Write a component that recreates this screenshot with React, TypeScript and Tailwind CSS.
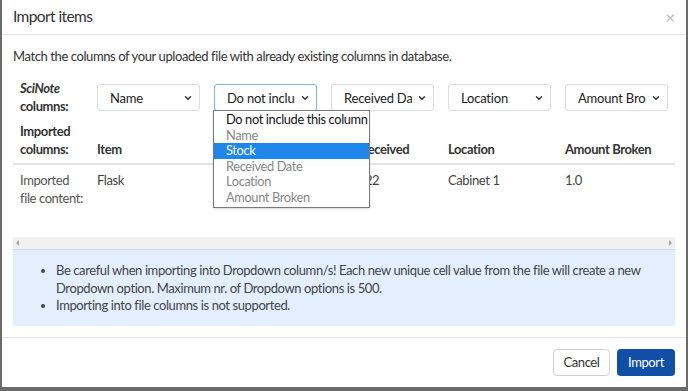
import { ChevronDown } from 'lucide-react';

const selects = ['Name', 'Do not include this column', 'Received Date', 'Location', 'Amount Broken'];
const headers = ['Item', 'Quantity', 'Date Received', 'Location', 'Amount Broken'];
const values = ['Flask', '12', '1.3.2022', 'Cabinet 1', '1.0'];
const options = ['Do not include this column', 'Name', 'Stock', 'Received Date', 'Location', 'Amount Broken'];

const Select = ({ label, focused }: { label: string; focused?: boolean }) => (
  <div
    className={`h-[27px] w-[103px] rounded-[3px] border bg-white flex items-center pl-[12px] pr-[6px] ${
      focused ? 'border-[#7fb2e5]' : 'border-[#dcdcdc]'
    }`}
  >
    <span className="flex-1 overflow-hidden whitespace-nowrap text-[13px] tracking-[-0.2px] text-[#222]">{label}</span>
    <ChevronDown size={10} strokeWidth={3.5} className="ml-[5px] shrink-0 text-[#333]" />
  </div>
);

export default function App() {
  return (
    <div className="w-[688px] h-[391px] bg-[#6a6a6a] px-[2px] pb-[4px] font-['Lato',sans-serif] text-[#333] tracking-[-0.4px]">
      <div className="h-full bg-white flex flex-col">
        <div className="h-[35px] shrink-0 border-b border-[#e5e5e5] flex items-center justify-between px-[11px]">
          <h1 className="text-[15.5px] tracking-[-0.6px] text-[#333]">Import items</h1>
          <span className="text-[18px] leading-none text-[#bbb]">×</span>
        </div>

        <div className="flex-1 px-[11px] pt-[12px]">
          <p className="text-[13px] leading-[18px]">Match the columns of your uploaded file with already existing columns in database.</p>

          <div className="relative mt-[7px] text-[13px] leading-[18px]">
            <div className="flex items-start h-[45px]">
              <div className="w-[77px] pl-[7px] pt-[7px] italic font-bold">SciNote<br /><span className="not-italic font-bold">columns:</span></div>
              {selects.map((s, i) => (
                <div key={s} className="w-[117px] px-[7px] pt-[12px]">
                  <Select label={s} focused={i === 1} />
                </div>
              ))}
            </div>

            <div className="flex items-end pt-[5px] pb-[5px] border-b-2 border-[#e4e4e4]">
              <div className="w-[77px] pl-[7px] font-bold">Imported<br />columns:</div>
              {headers.map((h) => (
                <div key={h} className="w-[117px] px-[7px] font-bold whitespace-nowrap">{h}</div>
              ))}
            </div>

            <div className="flex items-start pt-[6px]">
              <div className="w-[77px] pl-[7px] text-[#555]">Imported<br />file content:</div>
              {values.map((v) => (
                <div key={v} className="w-[117px] px-[7px] text-[#444]">{v}</div>
              ))}
            </div>

            <div className="absolute left-[200px] top-[38px] w-[157px] border border-[#7a7a7a] bg-white py-[1px] shadow-sm">
              {options.map((o, i) => (
                <div
                  key={o}
                  className={`h-[15.6px] text-[12.8px] tracking-[-0.35px] leading-[15.6px] pl-[12px] whitespace-nowrap overflow-hidden ${
                    i === 0 ? 'text-[#111]' : i === 2 ? 'bg-[#1e86ea] text-white' : 'text-[#888]'
                  }`}
                >
                  {o}
                </div>
              ))}
            </div>
          </div>

          <div className="mt-[30px] h-[12px] bg-[#f1f1f1] flex items-center justify-between px-[3px]">
            <span className="w-0 h-0 border-y-[3px] border-y-transparent border-r-[3px] border-r-[#a8a8a8]" />
            <span className="w-0 h-0 border-y-[3px] border-y-transparent border-l-[3px] border-l-[#a8a8a8]" />
          </div>

          <div className="bg-[#e3effe] border-t border-[#c9ddf6] pt-[12px] pb-[11px] pl-[43px] pr-[20px]">
            <ul className="list-disc text-[13px] leading-[17.5px] text-[#444]">
              <li>Be careful when importing into Dropdown column/s! Each new unique cell value from the file will create a new Dropdown option. Maximum nr. of Dropdown options is 500.</li>
              <li>Importing into file columns is not supported.</li>
            </ul>
          </div>
        </div>

        <div className="h-[50px] shrink-0 border-t border-[#e5e5e5] flex items-center justify-end gap-[7px] px-[11px]">
          <button className="h-[27px] w-[57px] rounded-[4px] border border-[#d0d0d0] bg-white text-[13px] text-[#333]">Cancel</button>
          <button className="h-[27px] w-[58px] rounded-[4px] bg-[#104ea8] text-[13px] text-white">Import</button>
        </div>
      </div>
    </div>
  );
}
